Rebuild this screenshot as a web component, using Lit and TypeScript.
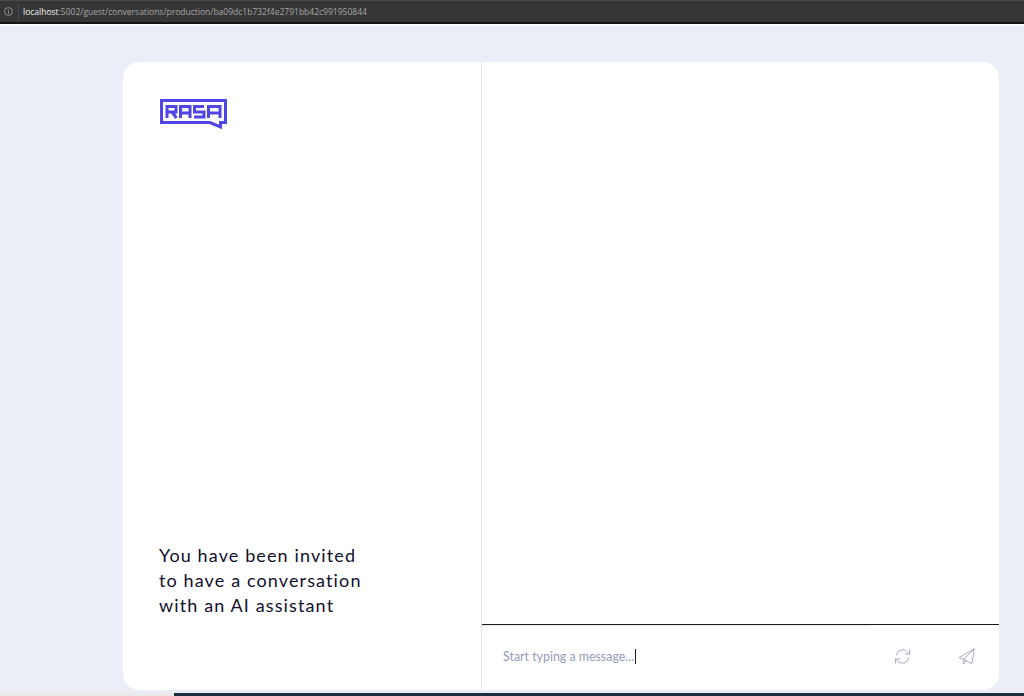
import { LitElement, html, css } from "lit";
import { customElement } from "lit/decorators.js";

@customElement("app-root")
export class AppRoot extends LitElement {
  static styles = css`
    :host { display: flex; flex-direction: column; height: 696px; width: 1024px; overflow: hidden; background: #ebeef7; font-family: Lato, sans-serif; }
    .bar { flex: none; background: #363636; display: flex; align-items: center; padding-left: 4px; gap: 3px; border-bottom: 2px solid #141414; border-top: 1px solid #4a4a4a; height: 21px; }
    .bar-icon { width: 9px; height: 9px; flex: none; }
    .sep { width: 1px; height: 16px; background: #4c4c4c; margin: 0 1px 0 2px; }
    .url { font: 8.5px "Open Sans", sans-serif; color: #a6a6a6; white-space: nowrap; }
    .url b { font-weight: 400; color: #f2f2f2; }
    .edge { height: 2px; flex: none; background: #fbfbfd; }
    .main { flex: 1; min-height: 0; padding: 36px 25px 3px 123px; display: flex; }
    .card { flex: 1; background: #fff; border-radius: 16px; display: flex; overflow: hidden; }
    .left { width: 359px; flex: none; box-sizing: border-box; padding: 37px 0 72px 36px; border-right: 1px solid #e4e7f1; display: flex; flex-direction: column; justify-content: space-between; }
    .logo { width: 68px; height: 31px; display: block; margin-left: 1px; }
    h1 { margin: 0; font: 400 18px/25px Lato, sans-serif; letter-spacing: 1.12px; color: #10102c; }
    .right { flex: 1; display: flex; flex-direction: column; }
    .messages { flex: 1; }
    .rule { height: 1px; background: #1c1c1c; flex: none; }
    .rule-under { height: 1px; width: 388px; background: #e9e9ec; flex: none; }
    .composer { height: 64px; flex: none; display: flex; align-items: center; padding: 0 24px 3px 21px; box-sizing: border-box; }
    .field { flex: 1; display: flex; align-items: center; font-size: 12.4px; color: #939db8; }
    .caret { width: 1px; height: 15px; background: #1c1c2e; margin-left: 1px; }
    .icons { display: flex; gap: 47px; align-items: center; }
    .icons svg { width: 17px; height: 17px; display: block; fill: none; stroke: #8f96b0; stroke-width: 1.1; stroke-linecap: round; stroke-linejoin: round; }
    .bottom { height: 3px; flex: none; display: flex; }
    .bottom .a { width: 174px; background: #ece9ea; }
    .bottom .b { flex: 1; background: #1c2f3c; }
  `;

  render() {
    return html`
      <div class="bar">
        <svg class="bar-icon" viewBox="0 0 10 10" fill="none" stroke="#9a9a9a" stroke-width="1">
          <circle cx="5" cy="5" r="4.4"></circle>
          <path d="M5 4.4V7.6M5 2.5V3.5"></path>
        </svg>
        <div class="sep"></div>
        <div class="url"><b>localhost</b>:5002/guest/conversations/production/ba09dc1b732f4e2791bb42c991950844</div>
      </div>
      <div class="edge"></div>
      <div class="main">
        <div class="card">
          <div class="left">
            <svg class="logo" viewBox="0 0 68 31" fill="none" stroke="#4f46e5" aria-label="Rasa">
              <path stroke-width="3" d="M1.5 1.5H65.5V23.5H60.5V28L50 23.5H1.5Z"></path>
              <path stroke-width="3" d="M7 19V7.5H16V13H7M12 13L16.5 19"></path>
              <path stroke-width="3" d="M20.5 19V7.5H30V19M20.5 14H30"></path>
              <path stroke-width="3" d="M44 7.5H34.5V13H44V18H34"></path>
              <path stroke-width="3" d="M48.5 19V7.5H60V19M48.5 14H60"></path>
            </svg>
            <h1>You have been invited<br />to have a conversation<br />with an AI assistant</h1>
          </div>
          <div class="right">
            <div class="messages"></div>
            <div class="rule"></div>
            <div class="rule-under"></div>
            <div class="composer">
              <div class="field">Start typing a message...<span class="caret"></span></div>
              <div class="icons">
                <svg viewBox="0 0 24 24">
                  <path d="M22 2.5V8.5H16"></path>
                  <path d="M2 21.5V15.5H8"></path>
                  <path d="M3.2 10A9.2 9.2 0 0 1 19 5.5L22 8.5M2 15.5L5 18.5A9.2 9.2 0 0 0 20.8 14"></path>
                </svg>
                <svg viewBox="0 0 24 24">
                  <path d="M22.5 1.5L1.5 13.5L8 16L19 22Z"></path>
                  <path d="M22.5 1.5L8 16V22.5L11.5 18"></path>
                </svg>
              </div>
            </div>
          </div>
        </div>
      </div>
      <div class="bottom"><div class="a"></div><div class="b"></div></div>
    `;
  }
}
